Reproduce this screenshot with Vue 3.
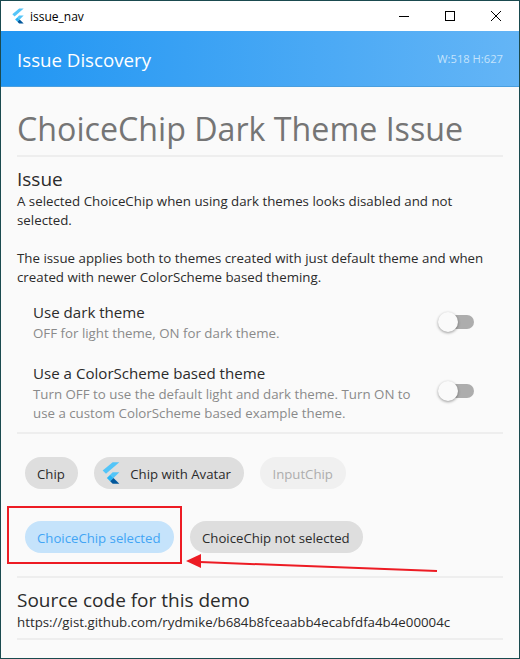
<script setup>
const chipsTop = [
  { label: 'Chip', avatar: false, kind: '' },
  { label: 'Chip with Avatar', avatar: true, kind: 'avatar' },
  { label: 'InputChip', avatar: false, kind: 'disabled' }
]
const toggles = [
  { title: 'Use dark theme', lines: ['OFF for light theme, ON for dark theme.'] },
  { title: 'Use a ColorScheme based theme', lines: ['Turn OFF to use the default light and dark theme. Turn ON to', 'use a custom ColorScheme based example theme.'] }
]
</script>

<template>
  <div class="window">
    <header class="titlebar">
      <svg class="app-icon" viewBox="0 0 24 28" aria-hidden="true">
        <path d="M14 1h8L6 15l-4-4z" fill="#54c5f8" />
        <path d="M14 13h8l-7 7-4-4z" fill="#54c5f8" />
        <path d="M11 16l4 4-4 4-4-4z" fill="#29b6f6" />
        <path d="M11 24l4-4 7 7h-8z" fill="#01579b" />
      </svg>
      <span class="app-name">issue_nav</span>
      <div class="controls">
        <svg class="ctl" viewBox="0 0 46 30"><path d="M18 15.5h10" stroke="#000" fill="none" /></svg>
        <svg class="ctl" viewBox="0 0 46 30"><rect x="18.5" y="10.5" width="9" height="9" stroke="#000" fill="none" /></svg>
        <svg class="ctl" viewBox="0 0 46 30"><path d="M18 10l10 10M28 10L18 20" stroke="#000" fill="none" /></svg>
      </div>
    </header>

    <div class="appbar">
      <span class="appbar-title">Issue Discovery</span>
      <span class="appbar-size">W:518 H:627</span>
    </div>

    <main class="content">
      <h1 class="headline">ChoiceChip Dark Theme Issue</h1>
      <hr class="rule" />
      <h2 class="section first">Issue</h2>
      <p class="body">A selected ChoiceChip when using dark themes looks disabled and not<br />selected.</p>
      <p class="body gap">The issue applies both to themes created with just default theme and when<br />created with newer ColorScheme based theming.</p>

      <div class="toggles">
        <div v-for="t in toggles" :key="t.title" class="toggle-row">
          <div class="toggle-text">
            <div class="toggle-title">{{ t.title }}</div>
            <div v-for="l in t.lines" :key="l" class="toggle-sub">{{ l }}</div>
          </div>
          <div class="switch"><span class="track"></span><span class="thumb"></span></div>
        </div>
      </div>
      <hr class="rule rule-chips" />

      <div class="chips top">
        <div v-for="c in chipsTop" :key="c.label" class="chip" :class="c.kind">
          <svg v-if="c.avatar" class="chip-icon" viewBox="0 0 24 28" aria-hidden="true">
            <path d="M14 1h8L6 15l-4-4z" fill="#54c5f8" />
            <path d="M14 13h8l-7 7-4-4z" fill="#54c5f8" />
            <path d="M11 16l4 4-4 4-4-4z" fill="#29b6f6" />
            <path d="M11 24l4-4 7 7h-8z" fill="#01579b" />
          </svg>
          {{ c.label }}
        </div>
      </div>
      <div class="chips bottom">
        <div class="chip selected">ChoiceChip selected</div>
        <div class="chip">ChoiceChip not selected</div>
      </div>
      <hr class="rule rule-source" />
      <h2 class="section source">Source code for this demo</h2>
      <p class="body">https://gist.github.com/rydmike/b684b8fceaabb4ecabfdfa4b4e00004c</p>
      <hr class="rule rule-end" />
    </main>

    <div class="callout"></div>
    <svg class="arrow" viewBox="0 0 520 659" aria-hidden="true">
      <path d="M437 571L200 562" stroke="#ed1c24" stroke-width="2" fill="none" />
      <path d="M186 561l15-7v14z" fill="#ed1c24" />
    </svg>
  </div>
</template>

<style scoped>
.window {
  position: relative;
  box-sizing: border-box;
  width: 520px;
  height: 659px;
  border: 1px solid #1a4a4f;
  background: #fafafa;
  overflow: hidden;
  display: flex;
  flex-direction: column;
  font-family: "Open Sans", "Noto Sans", sans-serif;
  color: #2b2b2b;
}
.titlebar {
  height: 30px;
  flex: none;
  background: #fff;
  display: flex;
  align-items: center;
}
.app-icon { width: 14px; height: 16px; margin-left: 10px; }
.app-name { margin-left: 5px; font-size: 12px; color: #000; }
.controls { margin-left: auto; display: flex; }
.ctl { width: 46px; height: 30px; display: block; }
.appbar {
  height: 56px;
  flex: none;
  box-sizing: border-box;
  display: flex;
  align-items: center;
  justify-content: space-between;
  padding: 0 16px;
  background: linear-gradient(90deg, #2196f3, #64b5f6);
  border-bottom: 1px solid #4a9fdf;
}
.appbar-title { font-size: 18.7px; color: #fff; padding-top: 2px; }
.appbar-size { font-size: 11.2px; color: #c4e3fc; font-weight: 500; }
.content { padding: 0 16px; }
.headline {
  margin: 18px 0 0;
  font-size: 32.2px;
  line-height: 47px;
  font-weight: 400;
  color: #757575;
  white-space: nowrap;
}
.rule { margin: 0; border: 0; height: 2px; background: #eeeeee; }
.headline + .rule { margin-top: 3px; }
.section { margin: 0; font-size: 19px; line-height: 25px; font-weight: 400; color: #2b2b2b; }
.first { margin-top: 10px; }
.body { margin: 0; font-size: 13.3px; line-height: 19px; white-space: nowrap; color: #2b2b2b; }
.gap { margin-top: 19px; }
.toggles { margin-top: 14px; }
.toggle-row {
  display: flex;
  align-items: center;
  justify-content: space-between;
  padding: 0 29px 0 16px;
}
.toggle-row + .toggle-row { margin-top: 19px; }
.toggle-row:last-child .switch { margin-top: -4px; }
.toggle-title { font-size: 15.1px; line-height: 23px; color: #2b2b2b; }
.toggle-sub { font-size: 13.3px; line-height: 19px; color: #8a8a8a; white-space: nowrap; }
.switch { position: relative; width: 36px; height: 20px; flex: none; }
.track {
  position: absolute;
  left: 2px;
  right: 0;
  top: 3px;
  height: 14px;
  border-radius: 7px;
  background: #adadad;
}
.thumb {
  position: absolute;
  left: 0;
  top: 0;
  width: 20px;
  height: 20px;
  border-radius: 50%;
  background: #fafafa;
  box-shadow: 0 1px 3px rgba(0, 0, 0, 0.4);
}
.rule-chips { margin-top: 9px; }
.chips { display: flex; gap: 16px; padding-left: 8px; }
.top { margin-top: 23px; }
.bottom { margin-top: 32px; }
.chip {
  height: 32px;
  box-sizing: border-box;
  display: flex;
  align-items: center;
  padding: 2px 13.5px 0 12px;
  border-radius: 16px;
  background: #dedede;
  font-size: 13.2px;
  color: #2b2b2b;
  white-space: nowrap;
}
.chip.avatar { padding-left: 7px; }
.chip-icon { width: 20px; height: 24px; margin: -2px 9px 0 0; }
.chip.disabled { background: #f0f0f0; color: #adadad; }
.chip.selected { background: #c5e3fb; color: #42a5f5; }
.rule-source { margin-top: 23px; }
.source { margin-top: 10px; }
.rule-end { margin-top: 6px; }
.callout {
  position: absolute;
  left: 6px;
  top: 505px;
  width: 175px;
  height: 58px;
  box-sizing: border-box;
  border: 2px solid #ed1c24;
}
.arrow {
  position: absolute;
  left: -1px;
  top: -1px;
  width: 520px;
  height: 659px;
  pointer-events: none;
}
</style>
